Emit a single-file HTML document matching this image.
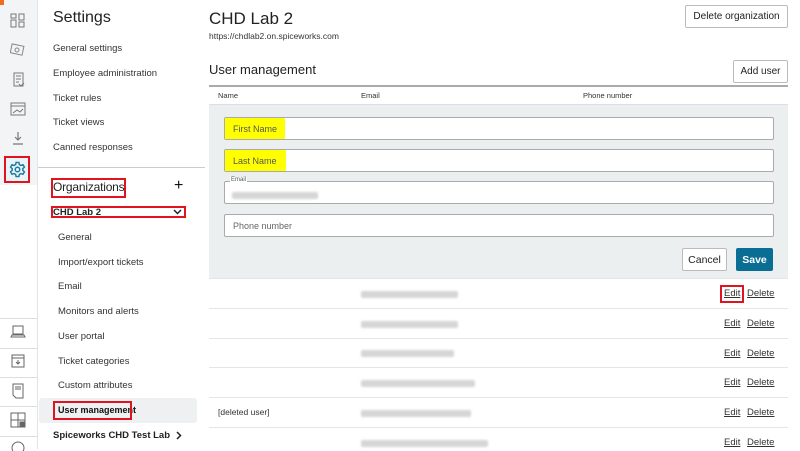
<!DOCTYPE html>
<html><head><style>
*{margin:0;padding:0;box-sizing:border-box}
body{width:800px;height:449px;overflow:hidden;background:#fff;font-family:"Liberation Sans",sans-serif;color:#222;position:relative}
.a{position:absolute}
.t{position:absolute;font-size:9.5px;color:#333;white-space:nowrap}
.inp{position:absolute;left:224px;width:550px;height:23px;border:1px solid #aaa;border-radius:2px;background:#fff}
.ph{position:absolute;left:8px;top:6px;font-size:9px;color:#666}
.row{position:absolute;left:209px;width:579px;height:1px;background:#e3e5e6}
.ed{position:absolute;font-size:9.5px;color:#333;text-decoration:underline}
.blur{position:absolute;height:7px;background:#d6d6d6;border-radius:2px;filter:blur(1px)}
.btn{position:absolute;border:1px solid #bbb;border-radius:2px;background:#fff;font-size:10px;color:#222;display:flex;align-items:center;justify-content:center}
.red{position:absolute;border:2px solid #e0141e}
svg{position:absolute}
</style></head><body>
<!-- rail -->
<div class="a" style="left:0;top:0;width:37px;height:185px;background:#f3f4f5"></div>
<div class="a" style="left:0;top:0;width:4px;height:5px;background:#f26b1d"></div>
<div class="a" style="left:37px;top:0;width:1px;height:449px;background:#e2e4e5"></div>
<svg style="left:10px;top:13px" width="15" height="15" viewBox="0 0 15 15" fill="none" stroke="#777" stroke-width="1"><rect x="1" y="1" width="5" height="4"/><rect x="1" y="7" width="5" height="7"/><rect x="9" y="1" width="5" height="6"/><rect x="9" y="9" width="5" height="5"/></svg>
<svg style="left:10px;top:43px" width="16" height="15" viewBox="0 0 16 15" fill="none" stroke="#888" stroke-width="1"><rect x="1" y="2" width="12" height="9" transform="rotate(12 7 7)"/><circle cx="7" cy="7" r="2"/></svg>
<svg style="left:12px;top:72px" width="13" height="16" viewBox="0 0 13 16" fill="none" stroke="#777" stroke-width="1"><rect x="2" y="1" width="9" height="13"/><path d="M4 4h5M4 7h5M4 10h3M7 12l2 2 3-3"/></svg>
<svg style="left:10px;top:102px" width="16" height="14" viewBox="0 0 16 14" fill="none" stroke="#777" stroke-width="1"><rect x="1" y="1" width="14" height="12"/><path d="M1 4h14M3 11l4-3 3 2 3-3"/></svg>
<svg style="left:12px;top:131px" width="12" height="14" viewBox="0 0 12 14" fill="none" stroke="#777" stroke-width="1.2"><path d="M6 1v8M3 6l3 3 3-3M1 13h10"/></svg>
<div class="a" style="left:4px;top:156px;width:26px;height:27px;background:#e8f4f7"></div>
<svg style="left:9px;top:161px" width="17" height="17" viewBox="0 0 24 24" fill="none" stroke="#1a7aa0" stroke-width="2"><circle cx="12" cy="12" r="3.2"/><path d="M10 2h4l.6 3 2.3 1.3 2.9-1 2 3.4-2.3 2v2.6l2.3 2-2 3.4-2.9-1-2.3 1.3-.6 3h-4l-.6-3-2.3-1.3-2.9 1-2-3.4 2.3-2v-2.6l-2.3-2 2-3.4 2.9 1L9.4 5z"/></svg>
<div class="red" style="left:4px;top:156px;width:26px;height:27px"></div>
<div class="a" style="left:0;top:318px;width:37px;height:1px;background:#ddd"></div>
<div class="a" style="left:0;top:348px;width:37px;height:1px;background:#ddd"></div>
<div class="a" style="left:0;top:377px;width:37px;height:1px;background:#ddd"></div>
<div class="a" style="left:0;top:406px;width:37px;height:1px;background:#ddd"></div>
<div class="a" style="left:0;top:436px;width:37px;height:1px;background:#ddd"></div>
<svg style="left:10px;top:325px" width="16" height="14" viewBox="0 0 16 14" fill="none" stroke="#666" stroke-width="1"><rect x="3" y="1" width="10" height="8"/><path d="M1 12h14l-1-2H2z"/></svg>
<svg style="left:11px;top:354px" width="14" height="14" viewBox="0 0 14 14" fill="none" stroke="#666" stroke-width="1"><rect x="1" y="1" width="12" height="12"/><path d="M1 4h12M7 6v4M5 8l2 2 2-2"/></svg>
<svg style="left:12px;top:383px" width="13" height="16" viewBox="0 0 13 16" fill="none" stroke="#666" stroke-width="1"><path d="M1 1h10v14H4l-3-3z"/><path d="M3 4h6M3 6h6"/></svg>
<svg style="left:10px;top:412px" width="16" height="16" viewBox="0 0 16 16" fill="none" stroke="#666" stroke-width="1"><rect x="1" y="1" width="14" height="14"/><path d="M1 8h14M8 1v14"/><rect x="10" y="10" width="4" height="5" fill="#666"/></svg>
<svg style="left:11px;top:441px" width="14" height="10" viewBox="0 0 14 10" fill="none" stroke="#666" stroke-width="1"><circle cx="7" cy="7" r="6"/></svg>
<!-- sidebar -->
<div class="t" style="left:53px;top:9px;font-size:16px;color:#222">Settings</div>
<div class="t" style="left:53px;top:43px">General settings</div>
<div class="t" style="left:53px;top:68px">Employee administration</div>
<div class="t" style="left:53px;top:93px">Ticket rules</div>
<div class="t" style="left:53px;top:117px">Ticket views</div>
<div class="t" style="left:53px;top:142px">Canned responses</div>
<div class="a" style="left:38px;top:167px;width:167px;height:1px;background:#ccc"></div>
<div class="t" style="left:53px;top:180px;font-size:12px;color:#222;letter-spacing:-0.2px">Organizations</div>
<div class="red" style="left:51px;top:178px;width:75px;height:20px"></div>
<div class="t" style="left:174px;top:177px;font-size:16px;color:#111">+</div>
<div class="t" style="left:53px;top:207px;font-weight:bold;font-size:9.5px;color:#222">CHD Lab 2</div>
<svg style="left:173px;top:209px" width="9" height="6" viewBox="0 0 9 6" fill="none" stroke="#222" stroke-width="1.5"><path d="M1 1l3.5 3.5L8 1"/></svg>
<div class="red" style="left:51px;top:206px;width:135px;height:12px"></div>
<div class="t" style="left:58px;top:232px">General</div>
<div class="t" style="left:58px;top:257px">Import/export tickets</div>
<div class="t" style="left:58px;top:281px">Email</div>
<div class="t" style="left:58px;top:306px">Monitors and alerts</div>
<div class="t" style="left:58px;top:331px">User portal</div>
<div class="t" style="left:58px;top:356px">Ticket categories</div>
<div class="t" style="left:58px;top:380px">Custom attributes</div>
<div class="a" style="left:39px;top:398px;width:158px;height:25px;background:#eef0f1;border-radius:3px"></div>
<div class="t" style="left:58px;top:405px;color:#111;font-weight:bold;font-size:9px">User management</div>
<div class="red" style="left:53px;top:401px;width:79px;height:19px"></div>
<div class="t" style="left:53px;top:430px;font-weight:bold;font-size:9.5px;color:#222">Spiceworks CHD Test Lab</div>
<svg style="left:176px;top:431px" width="6" height="9" viewBox="0 0 6 9" fill="none" stroke="#222" stroke-width="1.5"><path d="M1 1l3.5 3.5L1 8"/></svg>
<!-- main -->
<div class="t" style="left:209px;top:9px;font-size:17px;color:#222">CHD Lab 2</div>
<div class="t" style="left:209px;top:31px;font-size:8.5px">https://chdlab2.on.spiceworks.com</div>
<div class="btn" style="left:685px;top:5px;width:103px;height:23px">Delete organization</div>
<div class="t" style="left:209px;top:62px;font-size:13px;color:#222">User management</div>
<div class="btn" style="left:733px;top:60px;width:55px;height:23px">Add user</div>
<div class="a" style="left:209px;top:85px;width:579px;height:2px;background:#aaa"></div>
<div class="t" style="left:218px;top:91px;font-size:7.5px">Name</div>
<div class="t" style="left:361px;top:91px;font-size:7.5px">Email</div>
<div class="t" style="left:583px;top:91px;font-size:7.5px">Phone number</div>
<div class="a" style="left:209px;top:104px;width:579px;height:174px;background:#ecefef;border-top:1px solid #dde"></div>
<div class="inp" style="top:117px"><div class="a" style="left:0;top:0;width:60px;height:21px;background:#ffff00"></div><div class="ph" style="color:#555">First Name</div></div>
<div class="inp" style="top:149px"><div class="a" style="left:0;top:0;width:61px;height:21px;background:#ffff00"></div><div class="ph" style="color:#555">Last Name</div></div>
<div class="inp" style="top:181px"><div class="a" style="left:5px;top:-5px;background:#fff;font-size:6px;color:#555;padding:0 1px">Email</div><div class="blur" style="left:7px;top:10px;width:86px"></div></div>
<div class="inp" style="top:214px"><div class="ph">Phone number</div></div>
<div class="btn" style="left:682px;top:248px;width:45px;height:23px;font-size:10.5px">Cancel</div>
<div class="a" style="left:736px;top:248px;width:37px;height:23px;background:#0a6d94;border-radius:2px;color:#fff;font-weight:bold;font-size:10.5px;display:flex;align-items:center;justify-content:center">Save</div>
<div class="row" style="top:278px"></div>
<div class="row" style="top:308px"></div>
<div class="row" style="top:338px"></div>
<div class="row" style="top:367px"></div>
<div class="row" style="top:397px"></div>
<div class="row" style="top:427px"></div>
<div class="blur" style="left:361px;top:291px;width:97px"></div>
<div class="blur" style="left:361px;top:321px;width:97px"></div>
<div class="blur" style="left:361px;top:350px;width:93px"></div>
<div class="blur" style="left:361px;top:380px;width:114px"></div>
<div class="blur" style="left:361px;top:410px;width:110px"></div>
<div class="blur" style="left:361px;top:440px;width:127px"></div>
<div class="t" style="left:218px;top:407px;font-size:8.5px">[deleted user]</div>
<div class="ed" style="left:724px;top:288px">Edit</div><div class="ed" style="left:747px;top:288px">Delete</div>
<div class="red" style="left:720px;top:285px;width:24px;height:18px"></div>
<div class="ed" style="left:724px;top:318px">Edit</div><div class="ed" style="left:747px;top:318px">Delete</div>
<div class="ed" style="left:724px;top:348px">Edit</div><div class="ed" style="left:747px;top:348px">Delete</div>
<div class="ed" style="left:724px;top:377px">Edit</div><div class="ed" style="left:747px;top:377px">Delete</div>
<div class="ed" style="left:724px;top:407px">Edit</div><div class="ed" style="left:747px;top:407px">Delete</div>
<div class="ed" style="left:724px;top:437px">Edit</div><div class="ed" style="left:747px;top:437px">Delete</div>
</body></html>
